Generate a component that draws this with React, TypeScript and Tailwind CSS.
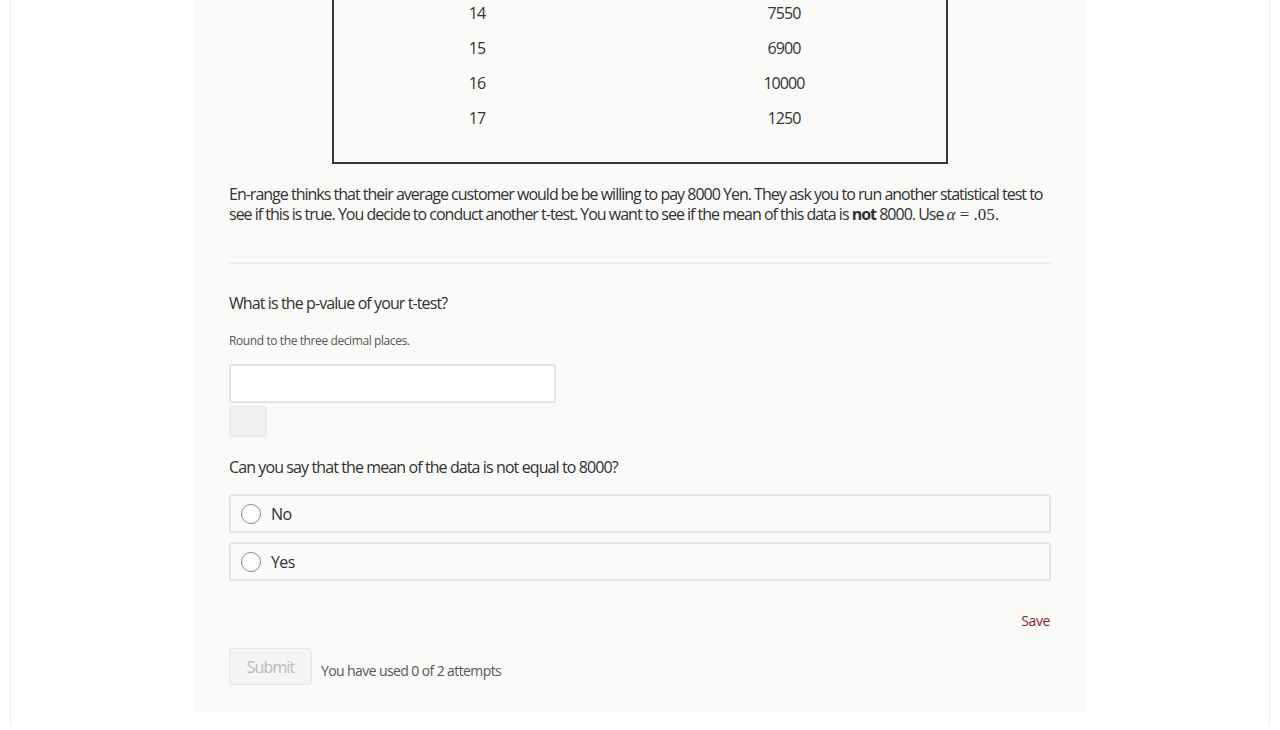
const rows = [
  ["14", "7550"],
  ["15", "6900"],
  ["16", "10000"],
  ["17", "1250"],
];

function Option({ label }: { label: string }) {
  return (
    <label className="flex h-[39px] items-center gap-[10px] rounded-[3px] border-2 border-[#e4e4e4] bg-[#fafaf9] pl-[10px]">
      <span className="h-[20px] w-[20px] rounded-full border border-[#8a8a8a] bg-white" />
      <span className="text-[16px] tracking-[-0.6px] text-[#313131]">{label}</span>
    </label>
  );
}

export default function App() {
  return (
    <div className="h-[730px] overflow-hidden bg-white font-['Open_Sans',sans-serif]">
      <div className="mx-[10px] h-full border-x border-[#ececec] px-[184px]">
        <div className="bg-[#fafaf9] px-[34px] pb-[27px]">
          {/* data table, scrolled so the top is out of view */}
          <div className="mx-[103px] -mt-[5px] border-x-2 border-b-2 border-[#3a3a3a] pb-[27px]">
            <div className="grid grid-cols-[286px_328px] text-[16px] tracking-[-0.9px] text-[#333]">
              {rows.map(([a, b]) => (
                <div key={a} className="contents">
                  <div className="flex h-[35px] items-center justify-center">{a}</div>
                  <div className="flex h-[35px] items-center justify-center">{b}</div>
                </div>
              ))}
            </div>
          </div>

          <p className="mt-[21px] text-[16px] leading-[19.5px] tracking-[-1px] text-[#313131]">
            En-range thinks that their average customer would be be willing to pay 8000 Yen. They ask you
            to run another statistical test to see if this is true. You decide to conduct another t-test.
            You want to see if the mean of this data is <b>not</b> 8000. Use{" "}
            <span className="font-['Liberation_Serif',serif] text-[17px] leading-[19.5px] tracking-normal">
              <i>α</i> = .05
            </span>
            .
          </p>

          <hr className="mt-[38px] border-t-2 border-[#ececec]" />

          <p className="mt-[27px] text-[16px] tracking-[-0.9px] text-[#313131]">
            What is the p-value of your t-test?
          </p>
          <p className="mt-[17px] text-[12px] tracking-[-0.4px] text-[#575757]">
            Round to the three decimal places.
          </p>

          <div className="mt-[14px] h-[39px] w-[327px] rounded-[3px] border-2 border-[#e4e4e4] bg-white" />
          <div className="mt-[3px] h-[31px] w-[38px] rounded-[3px] border border-[#e6e6e6] bg-[#efefef]" />

          <p className="mt-[18px] text-[16px] tracking-[-0.9px] text-[#313131]">
            Can you say that the mean of the data is not equal to 8000?
          </p>

          <div className="mt-[15px] flex flex-col gap-[9px]">
            <Option label="No" />
            <Option label="Yes" />
          </div>

          <div className="mt-[29px] flex justify-end">
            <span className="pr-[1px] text-[14px] tracking-[-0.4px] text-[#8d1d31]">Save</span>
          </div>

          <div className="mt-[17px] flex items-end gap-[9px]">
            <div className="flex h-[37px] w-[83px] items-center justify-center rounded-[3px] border border-[#e6e6e6] bg-[#f4f4f4] text-[16px] tracking-[-0.9px] text-[#b9b9b9]">
              Submit
            </div>
            <span className="pb-[4px] text-[14px] tracking-[-0.6px] text-[#575757]">
              You have used 0 of 2 attempts
            </span>
          </div>
        </div>
      </div>
    </div>
  );
}
